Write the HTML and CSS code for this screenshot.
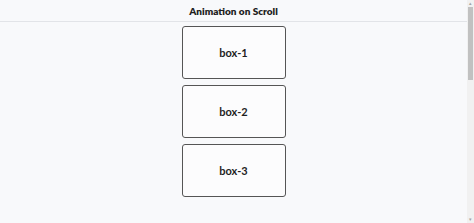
FILE: index.html
```html
<!DOCTYPE html>
<html lang="en">
  <head>
    <meta charset="UTF-8" />
    <meta name="viewport" content="width=device-width, initial-scale=1.0" />
    <title>Animation on Scroll</title>
    <link rel="stylesheet" href="styles.css">
  </head>
  <body>
    <div class="page">
      <header class="header">
        <h1>Animation on Scroll</h1>
      </header>
      <div class="container">
        <div class="box show">box-1</div>
        <div class="box show">box-2</div>
        <div class="box show">box-3</div>
        <div class="box">box-4</div>
        <div class="box">box-5</div>
        <div class="box">box-6</div>
      </div>
    </div>
    <div class="scrollbar">
      <span class="arrow">&#9652;</span>
      <div class="thumb"></div>
      <span class="arrow arrow-bottom">&#9662;</span>
    </div>
  </body>
</html>
```

FILE: styles.css
```css
body {
  margin: 0;
  height: 100vh;
  overflow: hidden;
  display: flex;
  font-family: Lato, "Open Sans", sans-serif;
  background-color: #f8f9fb;
  color: #1e1e1e;
}

.page {
  flex: 1;
  overflow: hidden;
}

.header {
  height: 21px;
  border-bottom: 1px solid #e2e4e8;
  display: flex;
  align-items: center;
  justify-content: center;
}

.header h1 {
  margin: 0;
  font-size: 10px;
  font-weight: 800;
}

.container {
  display: flex;
  flex-direction: column;
  align-items: center;
  gap: 6px;
  padding-top: 4px;
}

.box {
  width: 102px;
  height: 51px;
  border: 1.5px solid #555;
  border-radius: 3px;
  background-color: #fcfcfd;
  display: flex;
  align-items: center;
  justify-content: center;
  font-size: 11px;
  font-weight: 700;
  visibility: hidden;
  transform: translateX(-400%);
}

.box.show {
  visibility: visible;
  transform: translateX(0);
}

/* fake scrollbar */
.scrollbar {
  width: 7px;
  background-color: #f1f1f1;
  display: flex;
  flex-direction: column;
  align-items: center;
}

.arrow {
  font-size: 5px;
  line-height: 7px;
  height: 7px;
  color: #a3a3a3;
}

.arrow-bottom {
  margin-top: auto;
}

.thumb {
  width: 5px;
  height: 73px;
  background-color: #c1c1c1;
}
```
